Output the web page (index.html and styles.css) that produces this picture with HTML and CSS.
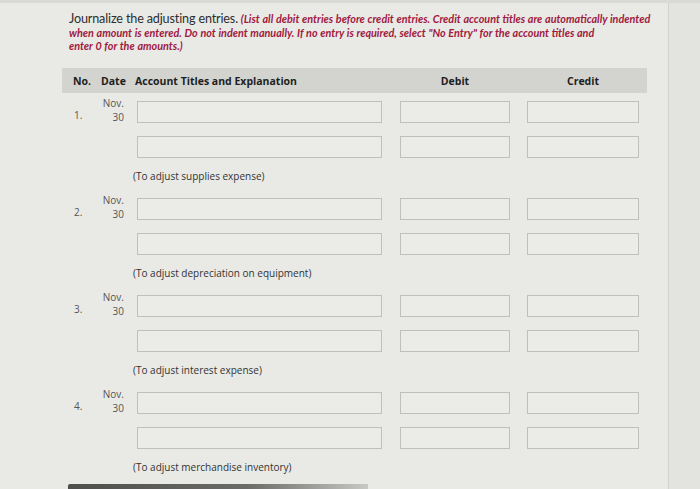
FILE: index.html
```html
<!DOCTYPE html>
<html>
<head>
<meta charset="utf-8">
<link rel="stylesheet" href="styles.css">
</head>
<body>
<div class="page">
  <div class="panel">
    <p class="instructions"><span class="lead">Journalize the adjusting entries.</span> <em>(List all debit entries before credit entries. Credit account titles are automatically indented<br>when amount is entered. Do not indent manually. If no entry is required, select "No Entry" for the account titles and<br>enter 0 for the amounts.)</em></p>

    <div class="sheet">
      <div class="row head">
        <div class="c-no">No.</div>
        <div class="c-date">Date</div>
        <div class="c-acct">Account Titles and Explanation</div>
        <div class="c-dr">Debit</div>
        <div class="c-cr">Credit</div>
      </div>

      <div class="entry">
        <div class="row line">
          <div class="c-no num">1.</div>
          <div class="c-date date">Nov.<br>30</div>
          <div class="c-acct"><div class="box acct"></div></div>
          <div class="c-dr"><div class="box dr"></div></div>
          <div class="c-cr"><div class="box cr"></div></div>
        </div>
        <div class="row line second">
          <div class="c-no"></div>
          <div class="c-date"></div>
          <div class="c-acct"><div class="box acct"></div></div>
          <div class="c-dr"><div class="box dr"></div></div>
          <div class="c-cr"><div class="box cr"></div></div>
        </div>
        <div class="explain">(To adjust supplies expense)</div>
      </div>

      <div class="entry">
        <div class="row line">
          <div class="c-no num">2.</div>
          <div class="c-date date">Nov.<br>30</div>
          <div class="c-acct"><div class="box acct"></div></div>
          <div class="c-dr"><div class="box dr"></div></div>
          <div class="c-cr"><div class="box cr"></div></div>
        </div>
        <div class="row line second">
          <div class="c-no"></div>
          <div class="c-date"></div>
          <div class="c-acct"><div class="box acct"></div></div>
          <div class="c-dr"><div class="box dr"></div></div>
          <div class="c-cr"><div class="box cr"></div></div>
        </div>
        <div class="explain">(To adjust depreciation on equipment)</div>
      </div>

      <div class="entry">
        <div class="row line">
          <div class="c-no num">3.</div>
          <div class="c-date date">Nov.<br>30</div>
          <div class="c-acct"><div class="box acct"></div></div>
          <div class="c-dr"><div class="box dr"></div></div>
          <div class="c-cr"><div class="box cr"></div></div>
        </div>
        <div class="row line second">
          <div class="c-no"></div>
          <div class="c-date"></div>
          <div class="c-acct"><div class="box acct"></div></div>
          <div class="c-dr"><div class="box dr"></div></div>
          <div class="c-cr"><div class="box cr"></div></div>
        </div>
        <div class="explain">(To adjust interest expense)</div>
      </div>

      <div class="entry">
        <div class="row line">
          <div class="c-no num">4.</div>
          <div class="c-date date">Nov.<br>30</div>
          <div class="c-acct"><div class="box acct"></div></div>
          <div class="c-dr"><div class="box dr"></div></div>
          <div class="c-cr"><div class="box cr"></div></div>
        </div>
        <div class="row line second">
          <div class="c-no"></div>
          <div class="c-date"></div>
          <div class="c-acct"><div class="box acct"></div></div>
          <div class="c-dr"><div class="box dr"></div></div>
          <div class="c-cr"><div class="box cr"></div></div>
        </div>
        <div class="explain">(To adjust merchandise inventory)</div>
      </div>
    </div>
    <div class="scrollbar"></div>
  </div>
  <div class="side"></div>
</div>
</body>
</html>
```

FILE: styles.css
```css
html, body {
  margin: 0;
  padding: 0;
  background: #e6e7e3;
}

.page {
  display: flex;
  height: 489px;
  overflow: hidden;
  border-top: 3px solid #d9dad6;
  box-sizing: border-box;
}

.panel {
  width: 668px;
  border-right: 1px solid #d2d3cf;
  background: #e9eae6;
  display: flex;
  flex-direction: column;
}

.side {
  flex: 1;
  background: #e3e4e0;
}

.instructions {
  margin: 9px 0 0 69px;
  width: 598px;
  white-space: nowrap;
  font-family: Lato, "Liberation Sans", sans-serif;
  font-size: 11px;
  line-height: 13.7px;
  color: #2e2e2e;
}

.instructions .lead {
  font-size: 12.6px;
  letter-spacing: -0.15px;
}

.instructions em {
  color: #a0193f;
  font-size: 10.8px;
  font-weight: bold;
  font-style: italic;
  word-spacing: 0.3px;
}

.sheet {
  margin: 15px 0 0 62px;
  width: 585px;
  flex: 1;
  min-height: 0;
}

.row {
  display: grid;
  grid-template-columns: 11px 28px 34px 265px 127px 120px;
}

.row::before {
  content: "";
}

.head {
  height: 25px;
  align-items: center;
  background: #d3d4d0;
  font-family: "Open Sans", sans-serif;
  font-weight: 700;
  font-size: 10.5px;
  color: #1e1e1e;
}

.head .c-dr {
  width: 110px;
  text-align: center;
}

.head .c-cr {
  width: 112px;
  text-align: center;
}

.entry {
  padding-top: 7px;
}

.line {
  height: 22px;
  align-items: center;
}

.second {
  margin-top: 14px;
}

.num {
  font-family: "Open Sans", sans-serif;
  font-size: 10px;
  color: #555;
  padding-top: 5px;
  padding-left: 1px;
}

.date {
  font-family: "Open Sans", sans-serif;
  font-size: 10px;
  line-height: 14px;
  color: #555;
  text-align: right;
  padding-right: 11px;
  margin-top: -4px;
}

.box {
  height: 22px;
  box-sizing: border-box;
  border: 1px solid #bfc0bc;
  background: #ebece8;
}

.box.acct {
  width: 245px;
  margin-left: 2px;
}

.box.dr {
  width: 110px;
}

.box.cr {
  width: 112px;
}

.explain {
  padding: 10px 0 6px 71px;
  line-height: 16px;
  font-family: "Open Sans", sans-serif;
  font-size: 10px;
  color: #333;
}

.scrollbar {
  flex: none;
  margin: 0 0 0 68px;
  height: 5px;
  width: 300px;
  background: linear-gradient(to right, #4e4f4d, #6b6c6a 60%, #c8c9c5);
  border-radius: 2px 0 0 0;
}
```
